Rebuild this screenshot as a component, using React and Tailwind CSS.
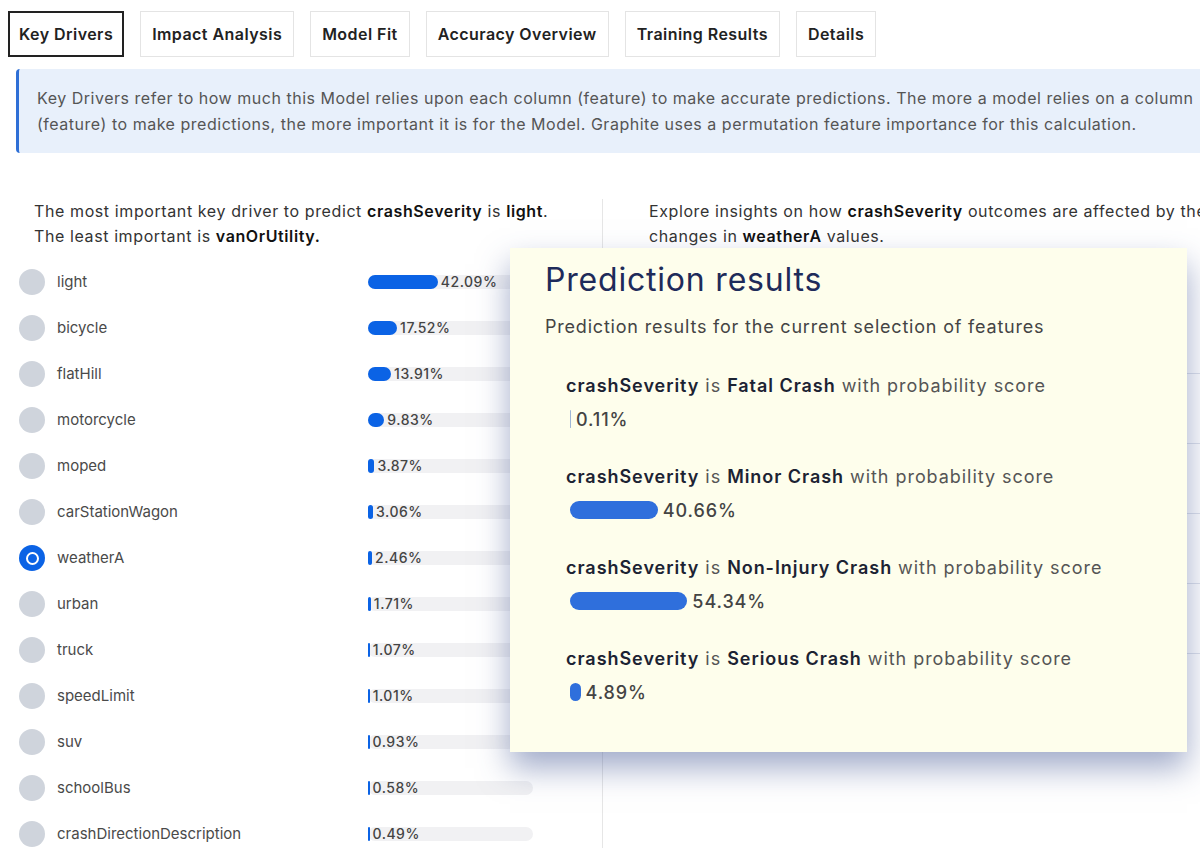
import React from 'react';

const tabs = ['Key Drivers', 'Impact Analysis', 'Model Fit', 'Accuracy Overview', 'Training Results', 'Details'];

// feature importance, sorted high to low
const drivers = [
  ['light', 42.09],
  ['bicycle', 17.52],
  ['flatHill', 13.91],
  ['motorcycle', 9.83],
  ['moped', 3.87],
  ['carStationWagon', 3.06],
  ['weatherA', 2.46],
  ['urban', 1.71],
  ['truck', 1.07],
  ['speedLimit', 1.01],
  ['suv', 0.93],
  ['schoolBus', 0.58],
  ['crashDirectionDescription', 0.49],
];

const predictions = [
  ['Fatal Crash', 0.11],
  ['Minor Crash', 40.66],
  ['Non-Injury Crash', 54.34],
  ['Serious Crash', 4.89],
];

const DriverRow = ({ name, value, selected }) => (
  <div className="flex h-[46px] items-center">
    {selected ? (
      <div className="flex h-[26px] w-[26px] items-center justify-center rounded-full bg-[#0b63e5]">
        <div className="h-[13px] w-[13px] rounded-full border-[2.5px] border-white" />
      </div>
    ) : (
      <div className="h-[26px] w-[26px] rounded-full bg-[#cfd4dc]" />
    )}
    <div className="ml-3 w-[311px] text-[15px] text-[#4a4a4a]">{name}</div>
    <div className="flex h-[14px] w-[165px] items-center rounded-full bg-[#f1f1f3]">
      <div
        className="h-[14px] shrink-0 rounded-full bg-[#0b63e5]"
        style={{ width: Math.max(1.5, value * 1.66) }}
      />
      <span className="ml-[3px] text-[14px] font-medium leading-none tracking-[0.5px] text-[#444]">
        {value.toFixed(2)}%
      </span>
    </div>
  </div>
);

const PredictionItem = ({ label, value }) => (
  <div>
    <div className="text-[18px] leading-[28px] tracking-[0.95px] text-[#555]">
      <span className="font-semibold text-[#1c2333]">crashSeverity</span> is{' '}
      <span className="font-semibold text-[#1c2333]">{label}</span> with probability score
    </div>
    <div className="mt-[5px] flex h-[28px] items-center pl-1">
      <div
        className={`h-[18px] shrink-0 rounded-full ${value < 1 ? 'bg-[#9fb6d8]' : 'bg-[#2f6fdc]'}`}
        style={{ width: Math.max(1, value * 2.16) }}
      />
      <span className="ml-[5px] text-[18px] font-medium tracking-[0.9px] text-[#444]">{value.toFixed(2)}%</span>
    </div>
  </div>
);

export default function App() {
  return (
    <div className="relative h-[848px] w-[1200px] overflow-hidden bg-white font-['Inter',sans-serif]">
      {/* Tabs */}
      <div className="flex gap-4 pl-2 pt-[11px]">
        {tabs.map((t, i) => (
          <div
            key={t}
            className={`flex h-[46px] items-center text-base font-semibold tracking-[0.45px] text-[#222] ${
              i === 0 ? 'border-2 border-[#222] px-[9px]' : 'border border-[#e4e4e4] px-[11px]'
            }`}
          >
            {t}
          </div>
        ))}
      </div>

      {/* Info banner */}
      <div className="ml-4 mt-3 w-[1230px] whitespace-nowrap rounded-l border-l-[3px] border-[#2e6fd6] bg-[#e8f0fb] py-4 pl-[18px] text-base leading-[26px] tracking-[0.52px] text-[#555]">
        Key Drivers refer to how much this Model relies upon each column (feature) to make accurate predictions. The more a model relies on a column
        <br />
        (feature) to make predictions, the more important it is for the Model. Graphite uses a permutation feature importance for this calculation.
      </div>

      <div className="mt-[46px] flex">
        {/* Left: key drivers list */}
        <div className="w-[602px] shrink-0 pl-[19px]">
          <p className="pl-[15px] text-base leading-[25px] tracking-[0.6px] text-[#333]">
            The most important key driver to predict <b className="font-semibold text-[#111]">crashSeverity</b> is{' '}
            <b className="font-semibold text-[#111]">light</b>.
            <br />
            The least important is <b className="font-semibold text-[#111]">vanOrUtility.</b>
          </p>
          <div className="mt-[10px]">
            {drivers.map(([name, value]) => (
              <DriverRow key={name} name={name} value={value} selected={name === 'weatherA'} />
            ))}
          </div>
        </div>

        {/* Right: impact insights */}
        <div className="h-[660px] flex-1 border-l border-[#e6e6e6] pl-[46px]">
          <p className="whitespace-nowrap text-base leading-[25px] tracking-[0.6px] text-[#333]">
            Explore insights on how <b className="font-semibold text-[#111]">crashSeverity</b> outcomes are affected by the
            <br />
            changes in <b className="font-semibold text-[#111]">weatherA</b> values.
          </p>
          <div className="mt-[55px]">
            {[0, 1, 2, 3, 4].map((r) => (
              <div key={r} className="h-[70px] border-b border-[#dde1ea]" />
            ))}
          </div>
        </div>
      </div>

      {/* Prediction results popover */}
      <div className="absolute left-[510px] top-[248px] h-[504px] w-[677px] bg-[#fefeec] pl-[35px] pt-3 shadow-[0_16px_30px_rgba(70,90,150,0.5)]">
        <h2 className="text-[32px] leading-[40px] tracking-[0.8px] text-[#1e2b5a]">Prediction results</h2>
        <p className="mt-[13px] text-[18px] leading-[28px] tracking-[0.8px] text-[#444]">
          Prediction results for the current selection of features
        </p>
        <div className="mt-[31px] flex flex-col gap-[30px] pl-[21px]">
          {predictions.map(([label, value]) => (
            <PredictionItem key={label} label={label} value={value} />
          ))}
        </div>
      </div>
    </div>
  );
}
